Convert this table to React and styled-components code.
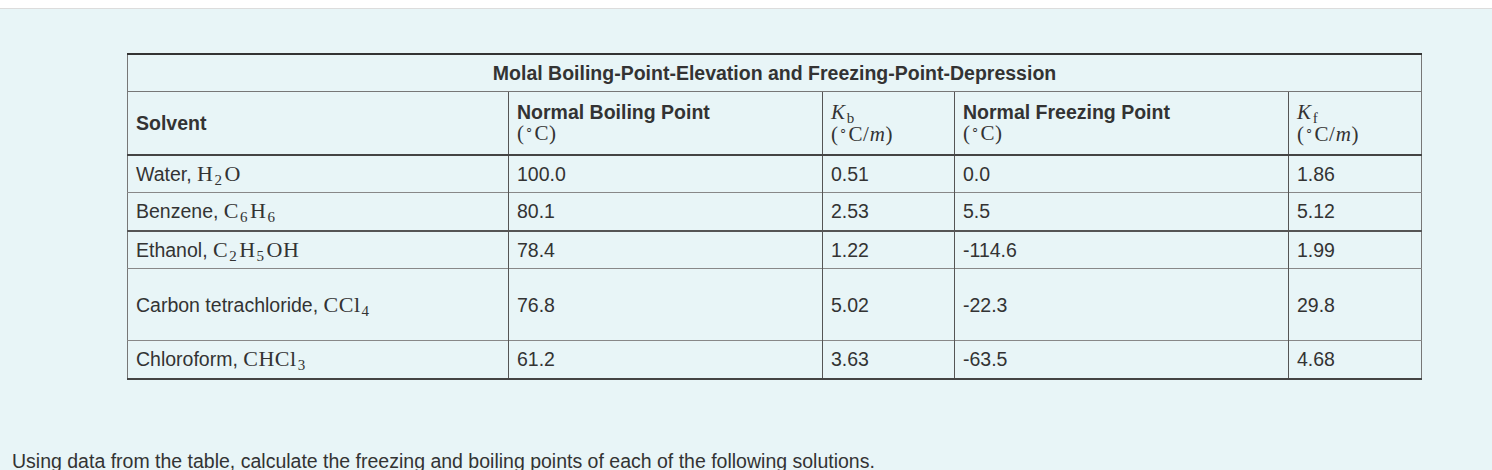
import React from "react";
import styled, { createGlobalStyle } from "styled-components";

const GlobalStyle = createGlobalStyle`
  html, body {
    margin: 0;
    padding: 0;
    background: #e8f5f7;
  }
  body {
    font-family: "Liberation Sans", Arial, sans-serif;
    color: #333;
  }
`;

const Page = styled.div`
  width: 1492px;
  height: 470px;
  overflow: hidden;
  background: #e8f5f7;
`;

const TopBar = styled.div`
  height: 8px;
  background: #fff;
  border-bottom: 1px solid #dcdcdc;
`;

const Content = styled.div`
  padding-top: 44px;
`;

const Table = styled.table`
  margin-left: 127px;
  border-collapse: collapse;
  table-layout: fixed;
  width: 1294px;
  font-size: 19.5px;
  color: #333;
  border-top: 2px solid #333;
  border-bottom: 2px solid #444;
  border-left: 1px solid #777;
  border-right: 1px solid #777;
`;

const TitleCell = styled.th`
  height: 36px;
  padding: 0;
  font-weight: bold;
  text-align: center;
  vertical-align: middle;
  border-bottom: 1px solid #777;
`;

const HeadRow = styled.tr`
  height: 63px;
  border-bottom: 2px solid #444;
`;

const HeadCell = styled.th`
  padding: 0 8px;
  font-weight: bold;
  text-align: left;
  vertical-align: middle;
  line-height: 20px;
  border-left: ${(p) => (p.$first ? "none" : "1px solid #555")};
`;

const Row = styled.tr`
  height: ${(p) => p.$h}px;
  border-bottom: ${(p) => (p.$strong ? "2px solid #555" : "1px solid #888")};
`;

const Cell = styled.td`
  padding: 0 8px;
  text-align: left;
  vertical-align: middle;
  line-height: 22px;
  border-left: ${(p) => (p.$first ? "none" : "1px solid #555")};
`;

const Math = styled.span`
  font-family: "Liberation Serif", "Times New Roman", serif;
  font-size: 22px;
  font-weight: normal;
  white-space: nowrap;
  letter-spacing: 0.5px;
`;

const Sub = styled.sub`
  font-size: 15px;
  vertical-align: -4px;
  line-height: 0;
  margin: 0 2px 0 1px;
`;

const Sup = styled.sup`
  font-size: 13px;
  vertical-align: 7px;
  line-height: 0;
  margin-right: 1px;
`;

const Italic = styled.i`
  font-style: italic;
`;

const Unit = styled.div`
  font-family: "Liberation Serif", "Times New Roman", serif;
  font-weight: normal;
  font-size: 21px;
  line-height: 22px;
  letter-spacing: 0.7px;
  white-space: nowrap;
`;

const Prompt = styled.p`
  margin: 70px 0 0 12px;
  font-size: 19.5px;
  line-height: 22px;
  color: #333;
  white-space: nowrap;
`;

const Formula = ({ parts }) => (
  <Math>
    {parts.map((p, i) =>
      typeof p === "number" ? <Sub key={i}>{p}</Sub> : <span key={i}>{p}</span>
    )}
  </Math>
);

const CelsiusPerMolal = () => (
  <Unit>
    (<Sup>∘</Sup>C/<Italic>m</Italic>)
  </Unit>
);

const Celsius = () => (
  <Unit>
    (<Sup>∘</Sup>C)
  </Unit>
);

const rows = [
  { name: "Water, ", f: ["H", 2, "O"], bp: "100.0", kb: "0.51", fp: "0.0", kf: "1.86", h: 38 },
  { name: "Benzene, ", f: ["C", 6, "H", 6], bp: "80.1", kb: "2.53", fp: "5.5", kf: "5.12", h: 38, strong: true },
  { name: "Ethanol, ", f: ["C", 2, "H", 5, "OH"], bp: "78.4", kb: "1.22", fp: "-114.6", kf: "1.99", h: 38 },
  { name: "Carbon tetrachloride, ", f: ["CCl", 4], bp: "76.8", kb: "5.02", fp: "-22.3", kf: "29.8", h: 72 },
  { name: "Chloroform, ", f: ["CHCl", 3], bp: "61.2", kb: "3.63", fp: "-63.5", kf: "4.68", h: 38 },
];

export default function App() {
  return (
    <Page>
      <GlobalStyle />
      <TopBar />
      <Content>
        <Table>
          <colgroup>
            <col style={{ width: 381 }} />
            <col style={{ width: 314 }} />
            <col style={{ width: 132 }} />
            <col style={{ width: 334 }} />
            <col style={{ width: 133 }} />
          </colgroup>
          <thead>
            <tr>
              <TitleCell colSpan={5}>
                Molal Boiling-Point-Elevation and Freezing-Point-Depression
              </TitleCell>
            </tr>
            <HeadRow>
              <HeadCell $first>Solvent</HeadCell>
              <HeadCell>
                Normal Boiling Point
                <Celsius />
              </HeadCell>
              <HeadCell>
                <Unit>
                  <Italic>K</Italic>
                  <Sub>b</Sub>
                </Unit>
                <CelsiusPerMolal />
              </HeadCell>
              <HeadCell>
                Normal Freezing Point
                <Celsius />
              </HeadCell>
              <HeadCell>
                <Unit>
                  <Italic>K</Italic>
                  <Sub>f</Sub>
                </Unit>
                <CelsiusPerMolal />
              </HeadCell>
            </HeadRow>
          </thead>
          <tbody>
            {rows.map((r) => (
              <Row key={r.name} $h={r.h} $strong={r.strong}>
                <Cell $first>
                  {r.name}
                  <Formula parts={r.f} />
                </Cell>
                <Cell>{r.bp}</Cell>
                <Cell>{r.kb}</Cell>
                <Cell>{r.fp}</Cell>
                <Cell>{r.kf}</Cell>
              </Row>
            ))}
          </tbody>
        </Table>
        <Prompt>
          Using data from the table, calculate the freezing and boiling points of each of the following solutions.
        </Prompt>
      </Content>
    </Page>
  );
}
